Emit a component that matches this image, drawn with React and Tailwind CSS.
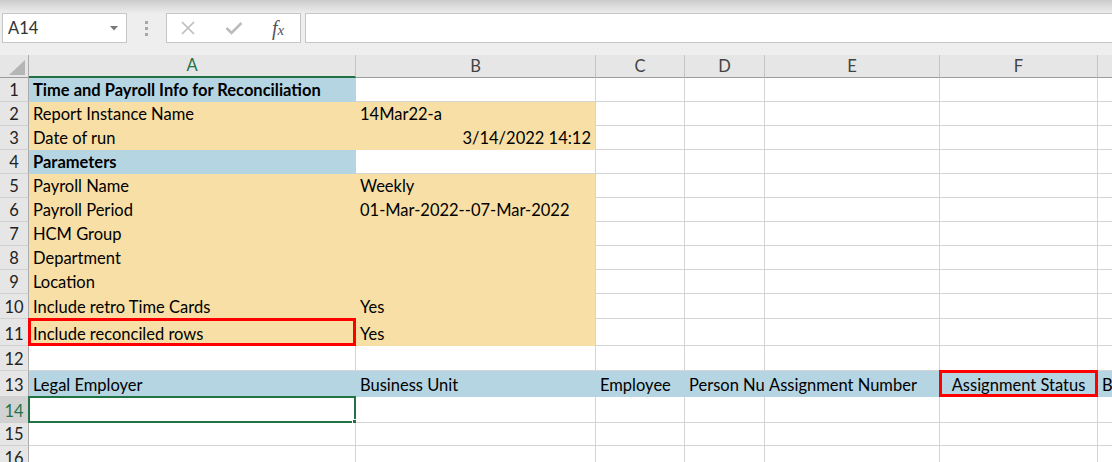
import clsx from "clsx";

const font = { fontFamily: "Lato, 'Noto Sans', sans-serif" };

const colWidths = ["w-[327px]", "w-[240px]", "w-[89px]", "w-[80px]", "w-[175px]", "w-[158px]", "w-[120px]"];
const colLetters = ["A", "B", "C", "D", "E", "F", "G"];

const rows = [
  { n: 1, h: "h-[24px]", cells: [{ t: "Time and Payroll Info for Reconciliation", fill: "blue", bold: true }] },
  { n: 2, h: "h-[24px]", cells: [{ t: "Report Instance Name", fill: "tan" }, { t: "14Mar22-a", fill: "tan", edge: true }] },
  { n: 3, h: "h-[24px]", cells: [{ t: "Date of run", fill: "tan" }, { t: "3/14/2022 14:12", fill: "tan", edge: true, right: true }] },
  { n: 4, h: "h-[24px]", cells: [{ t: "Parameters", fill: "blue", bold: true }] },
  { n: 5, h: "h-[24px]", cells: [{ t: "Payroll Name", fill: "tan" }, { t: "Weekly", fill: "tan", edge: true }] },
  { n: 6, h: "h-[24px]", cells: [{ t: "Payroll Period", fill: "tan" }, { t: "01-Mar-2022--07-Mar-2022", fill: "tan", edge: true }] },
  { n: 7, h: "h-[24px]", cells: [{ t: "HCM Group", fill: "tan" }, { fill: "tan", edge: true }] },
  { n: 8, h: "h-[24px]", cells: [{ t: "Department", fill: "tan" }, { fill: "tan", edge: true }] },
  { n: 9, h: "h-[24px]", cells: [{ t: "Location", fill: "tan" }, { fill: "tan", edge: true }] },
  { n: 10, h: "h-[25px]", cells: [{ t: "Include retro Time Cards", fill: "tan" }, { t: "Yes", fill: "tan", edge: true }] },
  { n: 11, h: "h-[27px]", cells: [{ t: "Include reconciled rows", fill: "tan", red: true }, { t: "Yes", fill: "tan", edge: true }] },
  { n: 12, h: "h-[25px]", cells: [] },
  {
    n: 13,
    h: "h-[26px]",
    cells: [
      { t: "Legal Employer", fill: "blue" },
      { t: "Business Unit", fill: "blue" },
      { t: "Employee", fill: "blue" },
      { t: "Person Number", fill: "blue", clip: true },
      { t: "Assignment Number", fill: "blue" },
      { t: "Assignment Status", fill: "blue", center: true, red: true },
      { t: "Business Unit", fill: "blue", clip: true },
    ],
  },
  { n: 14, h: "h-[26px]", cells: [{ selected: true }], active: true },
  { n: 15, h: "h-[23px]", cells: [] },
  { n: 16, h: "h-[24px]", cells: [] },
];

function Cell({ w, cell }) {
  const c = cell || {};
  return (
    <div
      className={clsx(
        w,
        "relative h-full shrink-0 border-r border-b flex items-end pb-[1px] pl-[4px] whitespace-nowrap leading-[19px] text-[16.5px] text-black",
        c.clip ? "overflow-hidden pr-0" : "pr-[4px]",
        c.fill === "blue" && "bg-[#b5d5e3] border-[#b5d5e3]",
        c.fill === "tan" && "bg-[#f7dfa5] border-[#f7dfa5]",
        !c.fill && "bg-white border-[#d4d4d4]",
        c.edge && "border-r-[#d4d4d4]",
        c.right && "justify-end",
        c.center && "justify-center",
        c.bold && "font-bold"
      )}
    >
      <span>{c.t}</span>
      {c.red && <div className="absolute -top-[1px] -left-[1px] -right-[1px] -bottom-[1px] border-[3px] border-[#ff0000]" />}
      {c.selected && (
        <>
          <div className="absolute -top-[1px] -left-[1px] -right-[1px] -bottom-[1px] border-2 border-[#217346]" />
          <div className="absolute -right-[4px] -bottom-[4px] w-[7px] h-[7px] bg-[#217346] border border-white" />
        </>
      )}
    </div>
  );
}

function Toolbar() {
  return (
    <div className="h-[55px] bg-[linear-gradient(#cbcbcb,#e8e8e8_11px,#eeeeee_14px)] pt-[13px] pl-[2px] flex items-start">
      <div className="w-[125px] h-[30px] bg-white border border-[#c6c6c6] flex items-center pl-[5px] pr-[8px]">
        <span className="text-[16.5px] text-[#333] flex-1">A14</span>
        <svg width="8" height="5" viewBox="0 0 8 5">
          <polygon points="0,0 8,0 4,4.5" fill="#777" />
        </svg>
      </div>
      <div className="w-[39px] h-[30px] flex flex-col items-center justify-center gap-[3px]">
        <div className="w-[3px] h-[3px] bg-[#a8a8a8]" />
        <div className="w-[3px] h-[3px] bg-[#a8a8a8]" />
        <div className="w-[3px] h-[3px] bg-[#a8a8a8]" />
      </div>
      <div className="w-[135px] h-[30px] bg-white border border-[#c6c6c6] flex items-center">
        <div className="w-[41px] flex justify-center">
          <svg width="14" height="14" viewBox="0 0 14 14">
            <path d="M1 1 L13 13 M13 1 L1 13" stroke="#bcbcbc" strokeWidth="1.6" />
          </svg>
        </div>
        <div className="w-[52px] flex justify-center">
          <svg width="18" height="14" viewBox="0 0 18 14">
            <path d="M1.5 7 L6.5 12 L16.5 2" stroke="#bcbcbc" strokeWidth="2.6" fill="none" />
          </svg>
        </div>
        <div className="w-[36px] flex justify-center">
          <span className="italic text-[#555] text-[20px] leading-none" style={{ fontFamily: "'Liberation Serif', serif" }}>
            f<span className="text-[15px]">x</span>
          </span>
        </div>
      </div>
      <div className="ml-[4px] flex-1 h-[30px] bg-white border border-[#c6c6c6] border-r-0" />
    </div>
  );
}

export default function App() {
  return (
    <div className="w-[1112px] h-[462px] overflow-hidden bg-white" style={font}>
      <Toolbar />
      <div className="flex h-[23px] bg-[#e6e6e6]">
        <div className="w-[29px] h-full shrink-0 border-r border-b border-[#ababab] border-b-[#9b9b9b] relative">
          <svg className="absolute left-0 top-0" width="28" height="22" viewBox="0 0 28 22">
            <polygon points="25,5 25,20 9,20" fill="#b5b5b5" />
          </svg>
        </div>
        {colWidths.map((w, i) => (
          <div
            key={i}
            className={clsx(
              w,
              "h-full shrink-0 border-r border-r-[#c4c4c4] flex items-center justify-center text-[16.5px]",
              i === 0 ? "border-b-2 border-b-[#217346] text-[#217346]" : "border-b border-b-[#9b9b9b] text-[#444]"
            )}
          >
            {colLetters[i]}
          </div>
        ))}
      </div>
      {rows.map((r) => (
        <div key={r.n} className={clsx("flex", r.h)}>
          <div
            className={clsx(
              "w-[29px] h-full shrink-0 border-r border-b border-r-[#ababab] border-b-[#d0d0d0] flex items-end justify-center pb-[1px] leading-[19px] text-[16.5px]",
              r.active ? "bg-[#d2d2d2] text-[#217346]" : "bg-[#e6e6e6] text-[#222]"
            )}
          >
            {r.n}
          </div>
          {colWidths.map((w, i) => (
            <Cell key={i} w={w} cell={r.cells[i]} />
          ))}
        </div>
      ))}
    </div>
  );
}
